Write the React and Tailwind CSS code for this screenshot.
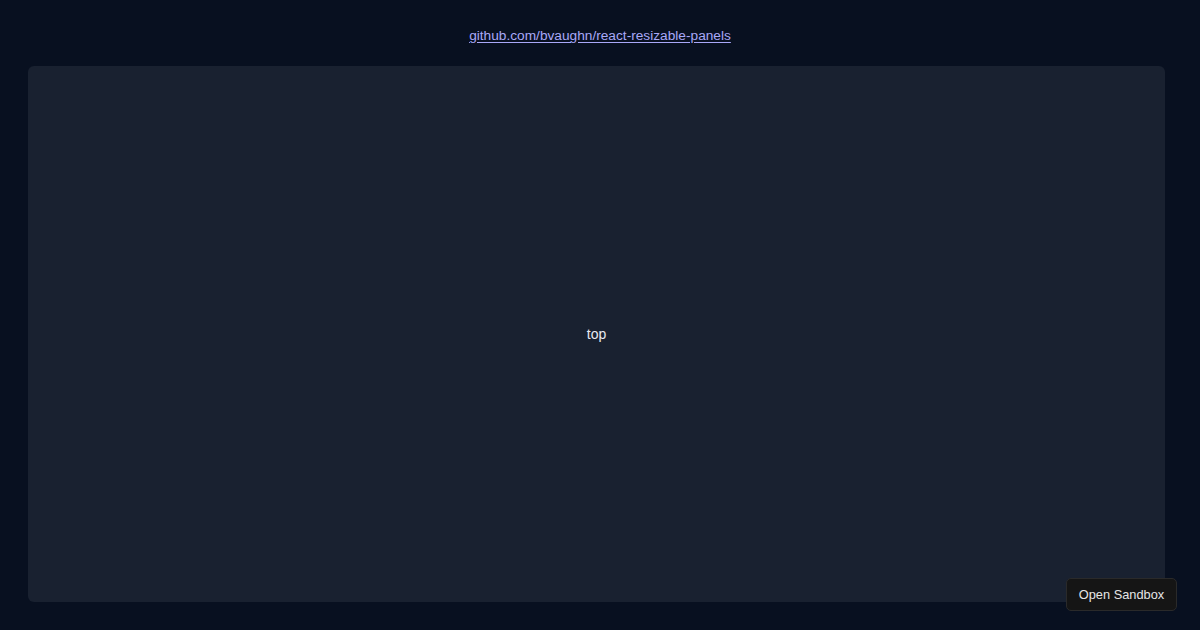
export default function App() {
  return (
    <div
      className="min-h-[630px] h-[630px] w-full bg-[#081020] text-white flex flex-col overflow-hidden"
      style={{ fontFamily: '"Liberation Sans", Arial, sans-serif' }}
    >
      <div className="h-[66px] flex items-center justify-center pt-[7px]">
        <a
          href="#"
          className="text-[13.7px] text-[#a9a8f8] underline underline-offset-[2px]"
        >
          github.com/bvaughn/react-resizable-panels
        </a>
      </div>
      <div className="pl-[28px] pr-[35px]">
        <div className="h-[536px] rounded-[6px] bg-[#192130] flex items-center justify-center">
          <span className="text-[14px] text-[#e8eaf0]">top</span>
        </div>
      </div>
      <button className="absolute right-[23px] bottom-[19px] w-[111px] h-[33px] rounded-[5px] border border-[#2a2a2a] bg-[#151515] text-[12.8px] text-[#e6e6e6] flex items-center justify-center">
        Open Sandbox
      </button>
    </div>
  );
}
